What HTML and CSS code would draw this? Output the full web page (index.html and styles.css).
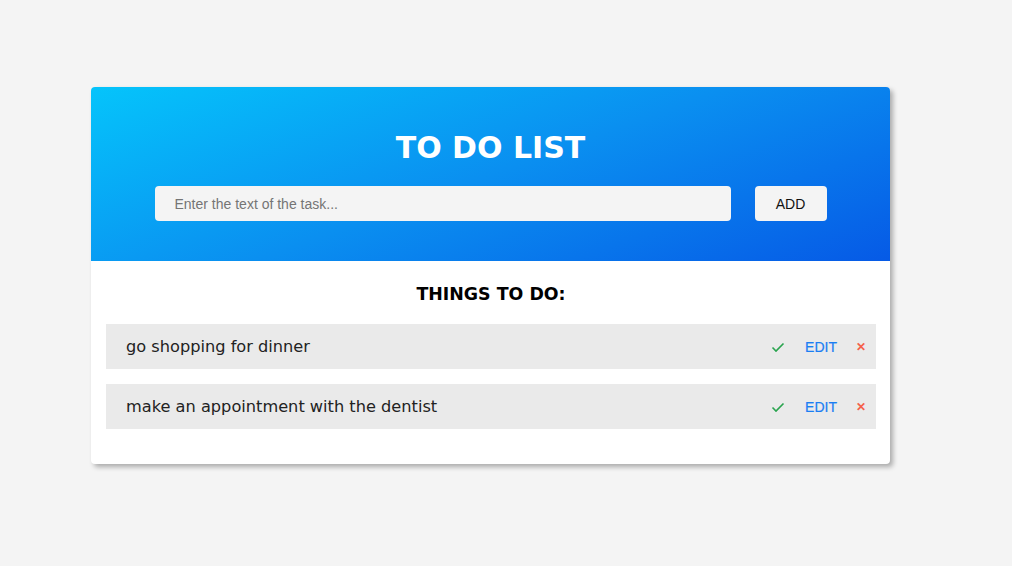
FILE: index.html
```html
<!DOCTYPE html>
<html>
<head>
<meta charset="utf-8">
<link rel="stylesheet" href="styles.css">
</head>
<body>
<div class="card">
  <header class="head">
    <h1 class="title">TO DO LIST</h1>
    <div class="form">
      <input class="input" type="text" placeholder="Enter the text of the task...">
      <button class="add">ADD</button>
    </div>
  </header>
  <section class="body">
    <h2 class="sub">THINGS TO DO:</h2>
    <ul class="list">
      <li class="item">
        <span class="text">go shopping for dinner</span>
        <span class="actions">
          <svg class="check" width="14" height="14" viewBox="0 0 14 14"><path d="M1.5 7.5 L5 11 L12.5 3.5" fill="none" stroke="#2aa44f" stroke-width="1.6"/></svg>
          <span class="edit">EDIT</span>
          <span class="del">✕</span>
        </span>
      </li>
      <li class="item">
        <span class="text">make an appointment with the dentist</span>
        <span class="actions">
          <svg class="check" width="14" height="14" viewBox="0 0 14 14"><path d="M1.5 7.5 L5 11 L12.5 3.5" fill="none" stroke="#2aa44f" stroke-width="1.6"/></svg>
          <span class="edit">EDIT</span>
          <span class="del">✕</span>
        </span>
      </li>
    </ul>
  </section>
</div>
</body>
</html>
```
FILE: styles.css
```css
html, body { margin: 0; padding: 0; }
body {
  background: #f4f4f4;
  font-family: "DejaVu Sans", "Open Sans", sans-serif;
  padding: 87px 0 0 91px;
  min-height: 566px;
  box-sizing: border-box;
}
.card {
  width: 799px;
  background: #fff;
  border-radius: 4px;
  box-shadow: 3px 3px 5px rgba(0,0,0,0.3);
  overflow: hidden;
}
.head {
  height: 174px;
  box-sizing: border-box;
  background: linear-gradient(160deg, #05c4fb 0%, #0a8ff0 50%, #065ae6 100%);
  padding-top: 43px;
  display: flex;
  flex-direction: column;
  align-items: center;
}
.title {
  margin: 0;
  color: #fff;
  font-family: "DejaVu Sans", sans-serif;
  font-weight: bold;
  font-size: 30px;
  line-height: 36px;
}
.form {
  margin-top: 20px;
  display: flex;
  gap: 24px;
}
.input {
  width: 576px;
  height: 35px;
  box-sizing: border-box;
  border: none;
  border-radius: 4px;
  background: #f4f4f4;
  padding: 0 20px;
  font-family: "Liberation Sans", Arial, sans-serif;
  font-size: 14px;
  color: #333;
  outline: none;
}
.input::placeholder { color: #757575; }
.add {
  width: 72px;
  height: 35px;
  border: none;
  border-radius: 4px;
  background: #f4f4f4;
  font-family: "Liberation Sans", Arial, sans-serif;
  font-size: 14px;
  color: #111;
  padding: 0;
}
.body {
  padding: 22px 14px 35px 15px;
}
.sub {
  margin: 0 0 19px;
  text-align: center;
  font-size: 17.4px;
  line-height: 22px;
  font-weight: bold;
  color: #000;
}
.list {
  list-style: none;
  margin: 0;
  padding: 0;
  display: flex;
  flex-direction: column;
  gap: 15px;
}
.item {
  height: 45px;
  background: #eaeaea;
  display: flex;
  align-items: center;
  justify-content: space-between;
  padding: 0 10px 0 20px;
}
.text {
  font-size: 16.2px;
  color: #222;
}
.actions {
  display: flex;
  align-items: center;
  font-family: "Liberation Sans", Arial, sans-serif;
}
.check { margin-right: 20px; }
.edit {
  color: #1a7ef3;
  font-size: 14px;
  font-weight: 500;
  -webkit-text-stroke: 0.2px #1a7ef3;
  margin-right: 19px;
}
.del {
  color: #f5614a;
  font-size: 12px;
  font-weight: bold;
}
```
